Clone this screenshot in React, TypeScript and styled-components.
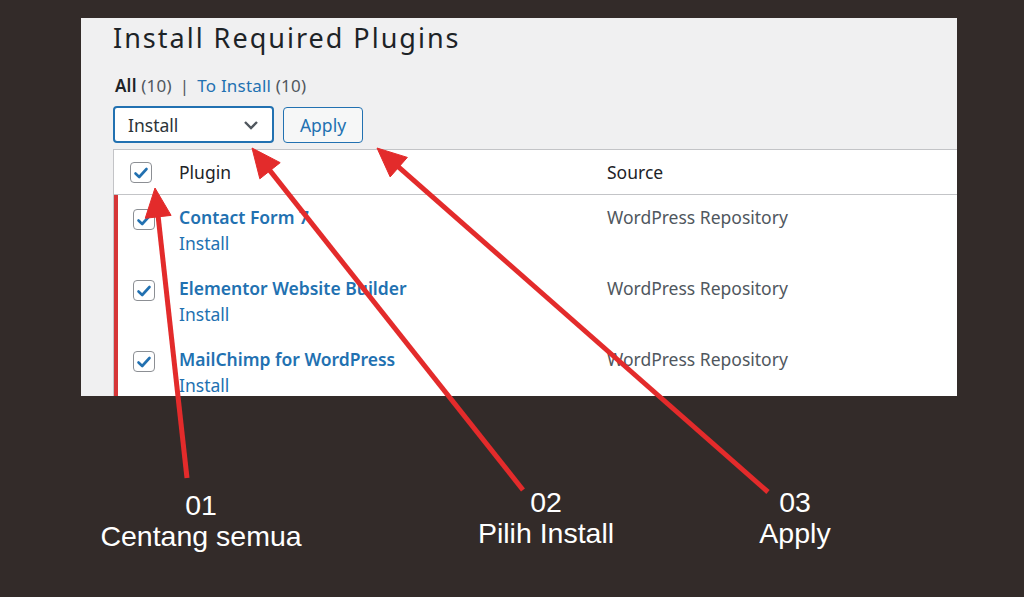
import React from 'react';
import styled, { createGlobalStyle } from 'styled-components';

const GlobalStyle = createGlobalStyle`
  html, body {
    margin: 0;
    padding: 0;
    background: #332b29;
  }
  * {
    box-sizing: border-box;
  }
`;

const Stage = styled.div`
  position: relative;
  width: 1024px;
  height: 597px;
  overflow: hidden;
  background: #332b29;
`;

const Panel = styled.div`
  margin: 18px 0 0 81px;
  width: 876px;
  height: 378px;
  overflow: hidden;
  background: #f0f0f1;
  padding: 1px 0 0 32px;
  font-family: 'Noto Sans', 'Open Sans', sans-serif;
  color: #1d2327;
`;

const Title = styled.h1`
  margin: 0;
  font-size: 27px;
  line-height: 38px;
  letter-spacing: 2px;
  font-weight: 400;
  color: #1d2327;
`;

const Views = styled.div`
  margin: 17px 0 0 2px;
  font-size: 17px;
  line-height: 24px;
  letter-spacing: 0.2px;
  color: #50575e;
  display: flex;
  gap: 5px;
  b {
    color: #1d2327;
    font-weight: 600;
  }
`;

const ViewLink = styled.span`
  color: #2271b1;
`;

const Sep = styled.span`
  margin: 0 3px;
`;

const Tablenav = styled.div`
  margin-top: 8px;
  display: flex;
  gap: 9px;
  height: 37px;
`;

const Select = styled.div`
  width: 161px;
  height: 37px;
  border: 2px solid #2271b1;
  border-radius: 4px;
  background: #fff;
  display: flex;
  align-items: center;
  justify-content: space-between;
  padding: 0 13px 0 13px;
  font-size: 17.5px;
  color: #2c3338;
`;

const Button = styled.div`
  width: 80px;
  height: 36px;
  margin-top: 1px;
  border: 1px solid #2271b1;
  border-radius: 4px;
  background: #f6f7f7;
  color: #2271b1;
  display: flex;
  align-items: center;
  justify-content: center;
  font-size: 17.5px;
`;

const Table = styled.div`
  margin-top: 6px;
  background: #fff;
  border-top: 1px solid #c3c4c7;
  border-left: 1px solid #c3c4c7;
  font-size: 17.5px;
`;

const Row = styled.div<{ $head?: boolean }>`
  display: grid;
  grid-template-columns: ${p => (p.$head ? '56px' : '52px')} 428px 1fr;
  border-left: ${p => (p.$head ? '0' : '4px solid #d63638')};
  border-bottom: ${p => (p.$head ? '1px solid #c3c4c7' : '0')};
  height: ${p => (p.$head ? '45px' : '71px')};
`;

const CheckCell = styled.div<{ $head?: boolean }>`
  padding: ${p => (p.$head ? '12px 0 0 16px' : '14px 0 0 15px')};
`;

const Cell = styled.div<{ $head?: boolean }>`
  padding: ${p => (p.$head ? '9px 9px 0' : '9px 9px 0')};
  line-height: 26px;
  color: ${p => (p.$head ? '#1d2327' : '#50575e')};
`;

const PluginName = styled.div`
  color: #2271b1;
  font-weight: 600;
`;

const Action = styled.div`
  color: #2271b1;
`;

const Box = styled.div`
  width: 22px;
  height: 21px;
  border: 1px solid #8c8f94;
  border-radius: 4px;
  background: #fff;
  display: flex;
  align-items: center;
  justify-content: center;
`;

const Overlay = styled.svg`
  position: absolute;
  left: 0;
  top: 0;
  width: 1024px;
  height: 597px;
  pointer-events: none;
`;

const Labels = styled.div`
  display: flex;
  align-items: flex-start;
  font-family: 'Liberation Sans', Arial, sans-serif;
  font-size: 28.5px;
  line-height: 31px;
  color: #fff;
`;

const Label = styled.div<{ $left: number; $top: number }>`
  width: 240px;
  margin-left: ${p => p.$left}px;
  margin-top: ${p => p.$top}px;
  text-align: center;
`;

const Check = () => (
  <Box>
    <svg width="16" height="14" viewBox="0 0 16 14">
      <path d="M2.5 7.5 L6.2 11 L13.5 3" fill="none" stroke="#2271b1" strokeWidth="2.6" strokeLinecap="round" strokeLinejoin="round" />
    </svg>
  </Box>
);

const plugins = ['Contact Form 7', 'Elementor Website Builder', 'MailChimp for WordPress'];

type Pt = [number, number];
const arrows: { tip: Pt; tail: Pt }[] = [
  { tip: [155, 188], tail: [187, 478] },
  { tip: [252, 148], tail: [523, 490] },
  { tip: [377, 148], tail: [768, 492] },
];

const Arrow = ({ tip, tail }: { tip: Pt; tail: Pt }) => {
  const dx = tail[0] - tip[0];
  const dy = tail[1] - tip[1];
  const len = Math.hypot(dx, dy);
  const ux = dx / len;
  const uy = dy / len;
  const headLen = 29;
  const half = 13;
  const bx = tip[0] + ux * headLen;
  const by = tip[1] + uy * headLen;
  const pts = [
    `${tip[0]},${tip[1]}`,
    `${bx - uy * half},${by + ux * half}`,
    `${bx + uy * half},${by - ux * half}`,
  ].join(' ');
  return (
    <g fill="#e32b2b" stroke="#e32b2b">
      <line x1={bx - ux * 2} y1={by - uy * 2} x2={tail[0]} y2={tail[1]} strokeWidth="5" />
      <polygon points={pts} strokeWidth="1" />
    </g>
  );
};

export default function App() {
  return (
    <Stage>
      <GlobalStyle />
      <Panel>
        <Title>Install Required Plugins</Title>
        <Views>
          <span>
            <b>All</b> (10)
          </span>
          <Sep>|</Sep>
          <span>
            <ViewLink>To Install</ViewLink> (10)
          </span>
        </Views>
        <Tablenav>
          <Select>
            <span>Install</span>
            <svg width="16" height="10" viewBox="0 0 16 10">
              <path d="M2 2 L8 8 L14 2" fill="none" stroke="#50575e" strokeWidth="2.4" />
            </svg>
          </Select>
          <Button>Apply</Button>
        </Tablenav>
        <Table>
          <Row $head>
            <CheckCell $head>
              <Check />
            </CheckCell>
            <Cell $head>Plugin</Cell>
            <Cell $head>Source</Cell>
          </Row>
          {plugins.map(name => (
            <Row key={name}>
              <CheckCell>
                <Check />
              </CheckCell>
              <Cell>
                <PluginName>{name}</PluginName>
                <Action>Install</Action>
              </Cell>
              <Cell>WordPress Repository</Cell>
            </Row>
          ))}
        </Table>
      </Panel>
      <Labels>
        <Label $left={81} $top={94}>
          01
          <br />
          Centang semua
        </Label>
        <Label $left={105} $top={91}>
          02
          <br />
          Pilih Install
        </Label>
        <Label $left={9} $top={91}>
          03
          <br />
          Apply
        </Label>
      </Labels>
      <Overlay viewBox="0 0 1024 597">
        {arrows.map((a, i) => (
          <Arrow key={i} tip={a.tip} tail={a.tail} />
        ))}
      </Overlay>
    </Stage>
  );
}
